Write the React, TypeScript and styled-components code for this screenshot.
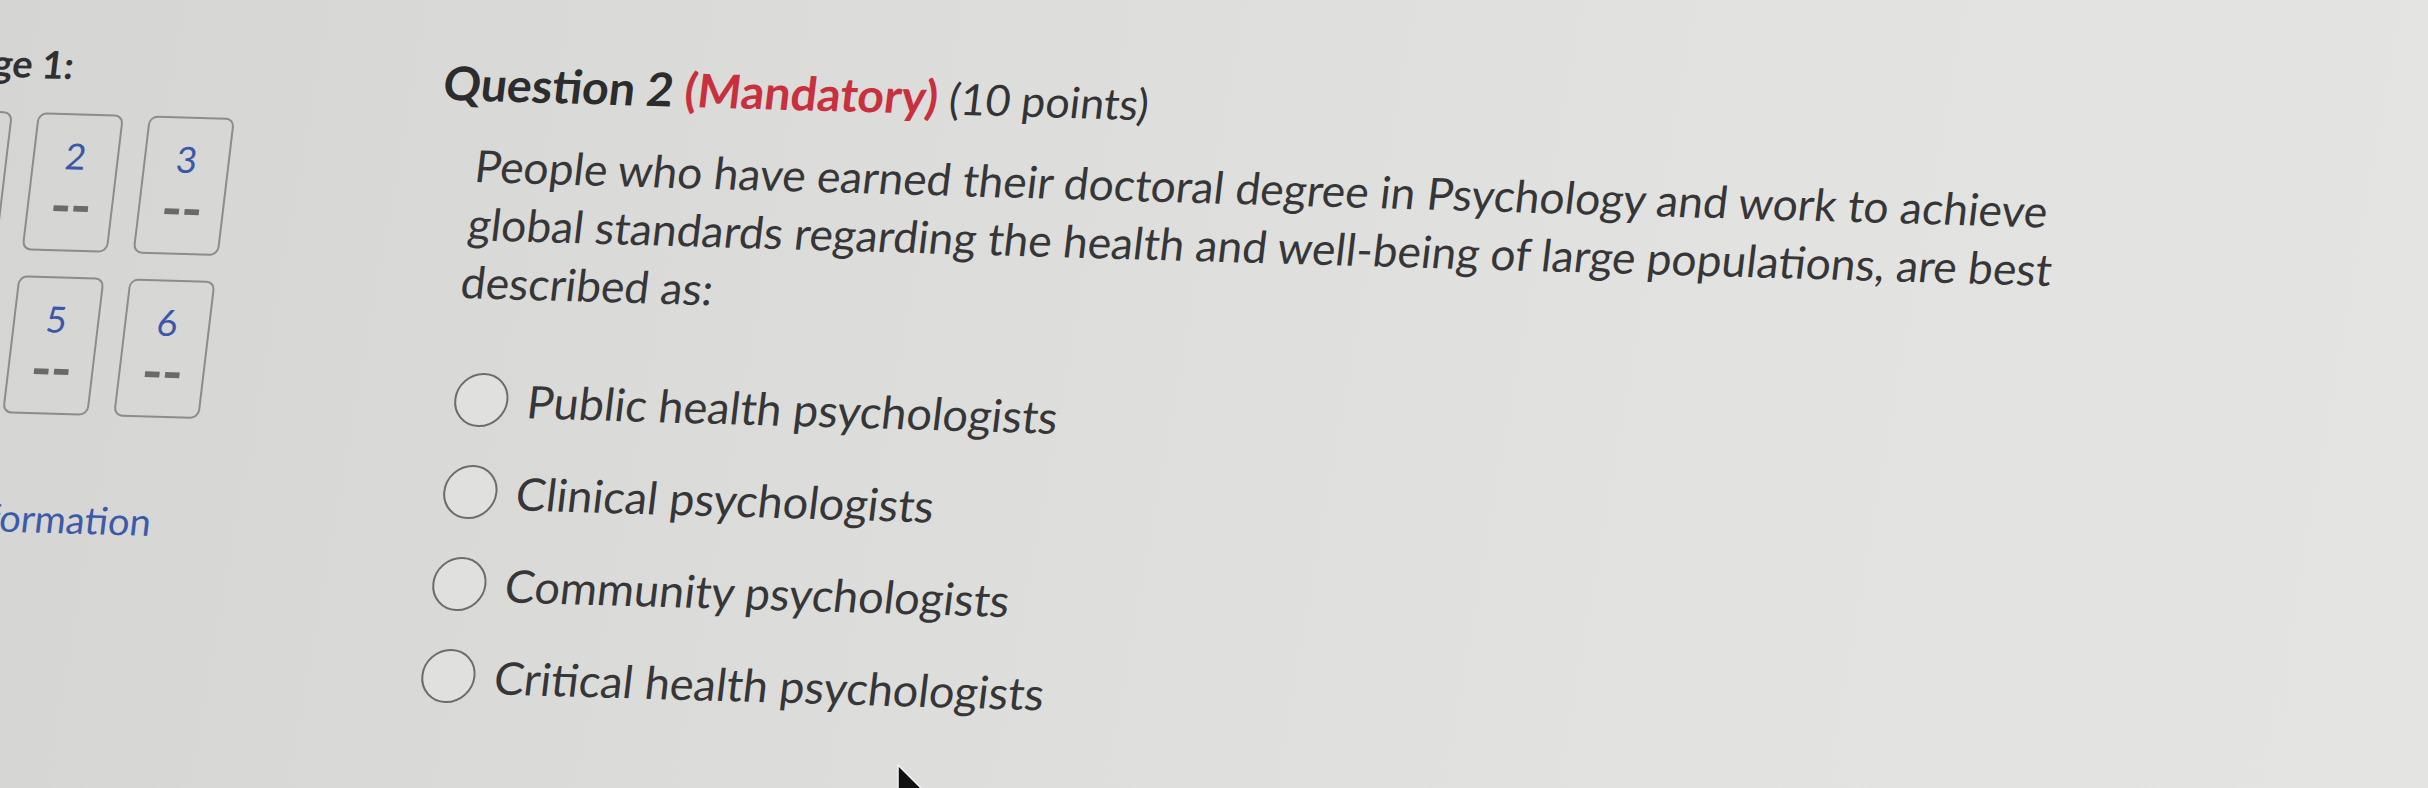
import React from "react";
import styled, { createGlobalStyle } from "styled-components";

const GlobalStyle = createGlobalStyle`
  html, body {
    margin: 0;
    padding: 0;
    width: 100%;
    height: 100%;
    overflow: hidden;
  }
  body {
    background: linear-gradient(100deg, #d5d5d3 0%, #dcdcda 35%, #e2e2e0 70%, #e4e4e2 100%);
    font-family: Lato, "Open Sans", "Noto Sans", sans-serif;
    color: #333335;
  }
`;

const Screen = styled.div`
  position: relative;
  width: 2428px;
  height: 788px;
  overflow: hidden;
`;

/* the photo is taken at an angle: the whole page is slanted */
const Page = styled.div`
  display: flex;
  align-items: flex-start;
  margin-left: -60px;
  padding-top: 40px;
  transform: skew(-6.8deg, 1.66deg);
  transform-origin: 0 0;
`;

const LeftPanel = styled.aside`
  flex: none;
  width: 512px;
  display: flex;
  flex-direction: column;
`;

const PageLabel = styled.h3`
  margin: 0;
  padding-left: 18px;
  font-size: 38px;
  line-height: 41px;
  font-weight: 700;
  color: #303032;
`;

const CardGrid = styled.div`
  margin-top: 28px;
  display: grid;
  grid-template-columns: repeat(3, 86px);
  grid-auto-rows: 138px;
  gap: 25px;
`;

const Card = styled.div`
  box-sizing: border-box;
  border: 2px solid #8c8c8c;
  border-radius: 9px;
  display: flex;
  flex-direction: column;
  align-items: center;
  padding-top: 18px;
`;

const CardNumber = styled.span`
  font-size: 36px;
  line-height: 44px;
  color: #3b58a8;
`;

const CardDash = styled.span`
  margin-top: 12px;
  font-size: 56px;
  line-height: 30px;
  font-weight: 700;
  letter-spacing: -1px;
  padding-left: 1px;
  color: #6a6a6a;
`;

const InfoLink = styled.a`
  margin-top: 80px;
  padding-left: 77px;
  font-size: 38px;
  line-height: 46px;
  color: #3a5aaa;
  text-decoration: none;
`;

const Main = styled.main`
  flex: none;
  display: flex;
  flex-direction: column;
`;

const Heading = styled.h2`
  margin: 1px 0 0;
  font-size: 46.5px;
  line-height: 53px;
  font-weight: 700;
  color: #2c2c2e;
`;

const Mandatory = styled.span`
  color: #c9303e;
`;

const Points = styled.span`
  font-size: 43px;
  font-weight: 400;
  color: #333335;
`;

const Prompt = styled.p`
  margin: 25px 0 0;
  padding-left: 41px;
  width: 1650px;
  font-size: 44.3px;
  line-height: 58px;
  color: #363638;
`;

const Options = styled.div`
  margin-top: 60px;
  padding-left: 48px;
  display: flex;
  flex-direction: column;
  gap: 34px;
`;

const Option = styled.label`
  display: flex;
  align-items: center;
  height: 58px;
  font-size: 45px;
  line-height: 58px;
  color: #363638;
`;

const Radio = styled.span`
  flex: none;
  box-sizing: border-box;
  width: 54px;
  height: 54px;
  border: 2px solid #6c6c6c;
  border-radius: 50%;
  background: #e0e0df;
  margin-right: 19px;
`;

const Cursor = styled.svg`
  position: absolute;
  left: 896px;
  top: 764px;
  width: 30px;
  height: 44px;
`;

const cards = ["1", "2", "3", "4", "5", "6"];

const answers = [
  "Public health psychologists",
  "Clinical psychologists",
  "Community psychologists",
  "Critical health psychologists",
];

export default function App(): JSX.Element {
  return (
    <Screen>
      <GlobalStyle />
      <Page>
        <LeftPanel>
          <PageLabel>Page 1:</PageLabel>
          <CardGrid>
            {cards.map((n) => (
              <Card key={n}>
                <CardNumber>{n}</CardNumber>
                <CardDash>--</CardDash>
              </Card>
            ))}
          </CardGrid>
          <InfoLink href="#">Information</InfoLink>
        </LeftPanel>
        <Main>
          <Heading>
            Question 2 <Mandatory>(Mandatory)</Mandatory>{" "}
            <Points>(10 points)</Points>
          </Heading>
          <Prompt>
            People who have earned their doctoral degree in Psychology and work
            to achieve global standards regarding the health and well-being of
            large populations, are best described as:
          </Prompt>
          <Options>
            {answers.map((a) => (
              <Option key={a}>
                <Radio />
                {a}
              </Option>
            ))}
          </Options>
        </Main>
      </Page>
      <Cursor viewBox="0 0 30 44">
        <path
          d="M2 1 L2 34 L10 27 L16 41 L21 39 L15 25 L26 25 Z"
          fill="#111"
          stroke="#f4f4f4"
          strokeWidth="1.5"
        />
      </Cursor>
    </Screen>
  );
}
